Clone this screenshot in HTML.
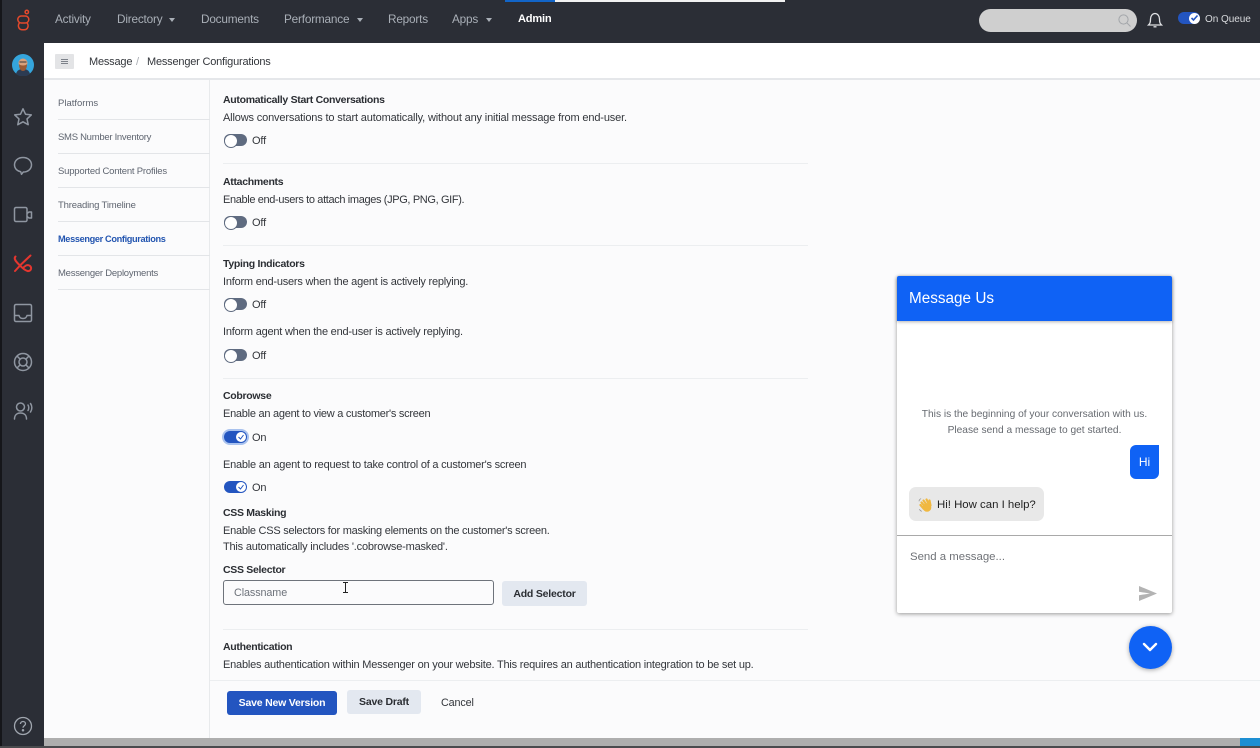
<!DOCTYPE html>
<html lang="en"><head><meta charset="utf-8"><title>Messenger Configurations</title>
<style>
*{box-sizing:border-box}
html,body{margin:0;padding:0}
body{width:1260px;height:748px;overflow:hidden;position:relative;background:#fbfbfc;font-family:"Liberation Sans",Arial,sans-serif;color:#2b2e33}
.a{position:absolute;white-space:nowrap;line-height:16px}
.nav{top:11px;font-size:11.8px;letter-spacing:-.2px;color:#a9afb7}
.side{left:58px;font-size:9.5px;letter-spacing:-.2px;color:#5f6570}
.line{position:absolute;left:58px;width:152px;height:1px;background:#e3e5e8}
.h{left:223px;font-size:10.5px;letter-spacing:-.3px;font-weight:bold;color:#2b2e33}
.t{left:223px;font-size:11px;letter-spacing:-.22px;color:#33363b}
.hr{position:absolute;left:223px;width:585px;height:1px;background:#eceef0}
.lab{left:252px;font-size:11px;letter-spacing:-.15px;color:#33363b}
.tg{position:absolute;left:224px;width:23px;height:12px;border-radius:6px}
.off{background:#5f6b80}
.off:before{content:"";position:absolute;left:0;top:0;width:12px;height:12px;border-radius:50%;background:#fff;border:1px solid #5f6b80}
.on{background:#2355c0}
.on:after{content:"";position:absolute;right:1px;top:1px;width:10px;height:10px;border-radius:50%;background:#fff}
.on svg{position:absolute;right:2px;top:2px;z-index:2}
.btn{position:absolute;font-size:10.5px;letter-spacing:-.2px;font-weight:bold;text-align:center;border-radius:3px}
.ic{position:absolute;left:13px}
</style></head><body>

<!-- top bar -->
<div style="position:absolute;left:0;top:0;width:1260px;height:43px;background:#2b2e36"></div>
<!-- left rail -->
<div style="position:absolute;left:0;top:0;width:44px;height:748px;background:#2b2e36"></div>
<div style="position:absolute;left:0;top:0;width:2px;height:748px;background:#15161a"></div>
<div style="position:absolute;left:505px;top:0;width:50px;height:2px;background:#1265c8"></div>
<div style="position:absolute;left:555px;top:0;width:230px;height:2px;background:#f1f1f1"></div>

<!-- logo -->
<svg style="position:absolute;left:15px;top:8px" width="18" height="24" viewBox="0 0 18 24" fill="none" stroke="#e5492c" stroke-width="1.5">
<circle cx="11.800" cy="4" r="1.700"/><rect x="2.800" y="8" width="11" height="7" rx="3.500"/><path d="M4.500 15c-2 2-1.300 6.800 3 6.800h1.500c4.300 0 5-4.800 3-6.800"/></svg>

<div class="a nav" style="left:55px">Activity</div>
<div class="a nav" style="left:117px">Directory</div>
<div style="position:absolute;left:169px;top:18px;border:3.500px solid transparent;border-top:4px solid #a9afb7"></div>
<div class="a nav" style="left:201px">Documents</div>
<div class="a nav" style="left:284px">Performance</div>
<div style="position:absolute;left:357px;top:18px;border:3.500px solid transparent;border-top:4px solid #a9afb7"></div>
<div class="a nav" style="left:388px">Reports</div>
<div class="a nav" style="left:452px">Apps</div>
<div style="position:absolute;left:486px;top:18px;border:3.500px solid transparent;border-top:4px solid #a9afb7"></div>
<div class="a nav" style="left:518px;color:#fff;font-weight:bold;font-size:11.100px">Admin</div>

<!-- search -->
<div style="position:absolute;left:979px;top:9px;width:158px;height:23px;border-radius:12px;background:#cfcfcf"></div>
<svg style="position:absolute;left:1117px;top:13px" width="15" height="15" viewBox="0 0 15 15" fill="none" stroke="#a3a6aa" stroke-width="1"><circle cx="6.500" cy="6.500" r="4.600"/><path d="M10 10l3.500 3.500"/></svg>
<!-- bell -->
<svg style="position:absolute;left:1146px;top:11px" width="18" height="18" viewBox="0 0 18 18" fill="none" stroke="#dfe1e4" stroke-width="1.300"><path d="M2.500 14h13c-1.500-1.500-2-2.500-2-6 0-3-2-5.500-4.500-5.500S4.500 5 4.500 8c0 3.500-.5 4.500-2 6z"/><path d="M7.500 15.800h3"/></svg>
<!-- queue toggle -->
<div style="position:absolute;left:1178px;top:12px;width:22px;height:12px;border-radius:6px;background:#2355c0"></div>
<div style="position:absolute;left:1189px;top:12.500px;width:11px;height:11px;border-radius:50%;background:#fff"></div>
<svg style="position:absolute;left:1190px;top:14px" width="9" height="8" viewBox="0 0 9 8" fill="none" stroke="#2355c0" stroke-width="1.600"><path d="M1.500 4l2 2 4-4.500"/></svg>
<div class="a" style="left:1205px;top:12px;font-size:10px;letter-spacing:-.05px;color:#d8dadd">On Queue</div>

<!-- content sheet -->
<div style="position:absolute;left:44px;top:43px;width:1216px;height:695px;background:#fbfbfc"></div>
<div style="position:absolute;left:44px;top:43px;width:1216px;height:37px;background:#fff;border-bottom:2px solid #e5e7ea"></div>
<div style="position:absolute;left:55px;top:54px;width:19px;height:15px;background:#e3e4e6;border-radius:1px"></div>
<div style="position:absolute;left:61px;top:59px;width:7px;height:1px;background:#7d828a;box-shadow:0 2px 0 #7d828a,0 4px 0 #7d828a"></div>
<div class="a" style="left:89px;top:54px;font-size:11px;letter-spacing:-.2px;color:#33363b">Message</div>
<div class="a" style="left:136px;top:54px;font-size:11px;color:#a8acb2">/</div>
<div class="a" style="left:147px;top:54px;font-size:11px;letter-spacing:-.2px;color:#33363b">Messenger Configurations</div>

<!-- avatar -->
<svg style="position:absolute;left:12px;top:54px" width="22" height="22" viewBox="0 0 22 22"><circle cx="11" cy="11" r="11" fill="#35a5dc"/><path d="M4 20c1-4 4-5 7-5s6 1 7 5a11 11 0 0 1-14 0z" fill="#2c3b52"/><circle cx="11" cy="9" r="4.500" fill="#d9a07a"/><path d="M7 10c0 5 2 7 4 7s4-2 4-7c-1 2-7 2-8 0z" fill="#9a5a34"/><path d="M7.500 8h7" stroke="#3a3a3a" stroke-width="1"/></svg>

<!-- rail icons -->
<svg class="ic" style="top:107px" width="20" height="20" viewBox="0 0 20 20" fill="none" stroke="#8f96a1" stroke-width="1.500" stroke-linejoin="round"><path d="M10 1.800l2.500 5.400 5.800.7-4.300 4 1.200 5.800-5.200-2.900-5.200 2.900 1.200-5.800-4.300-4 5.800-.7z"/></svg>
<svg class="ic" style="top:156px" width="20" height="20" viewBox="0 0 20 20" fill="none" stroke="#8f96a1" stroke-width="1.500" stroke-linejoin="round"><path d="M10 1.500c4.800 0 8.500 3 8.500 7.300s-3.700 7.200-8.200 7.200l-1.800 2.300-.8-2.600C4 15 1.500 12.400 1.500 8.800 1.500 4.500 5.200 1.500 10 1.500z"/></svg>
<svg class="ic" style="top:205px" width="20" height="20" viewBox="0 0 20 20" fill="none" stroke="#8f96a1" stroke-width="1.500" stroke-linejoin="round"><rect x="1.500" y="2.500" width="12.500" height="14" rx="1.500"/><path d="M14 8.500l2-1.500h2.500v6H16l-2-1.500"/></svg>
<svg class="ic" style="top:253px" width="20" height="21" viewBox="0 0 20 21" fill="none" stroke="#e5362f" stroke-width="2" stroke-linecap="round" stroke-linejoin="round"><path d="M17.500 2.500L8 11.500 2 18"/><path d="M2.500 3.500C1 5 2 7.500 4.500 10c3 3 6 7 10 8 2.500.5 4-1.500 3.500-3.500-.5-2-3-3-5-2l-2 1.500"/></svg>
<svg class="ic" style="top:303px" width="20" height="20" viewBox="0 0 20 20" fill="none" stroke="#8f96a1" stroke-width="1.500" stroke-linejoin="round"><rect x="1.500" y="1.500" width="17" height="17" rx="1.500"/><path d="M1.500 12.500h4.500c.5 2 2 3 4 3s3.500-1 4-3h4.500"/></svg>
<svg class="ic" style="top:352px" width="20" height="20" viewBox="0 0 20 20" fill="none" stroke="#8f96a1" stroke-width="1.500"><circle cx="10" cy="10" r="8.500"/><circle cx="10" cy="10" r="4"/><path d="M4 4l3 3M16 4l-3 3M4 16l3-3M16 16l-3-3"/></svg>
<svg class="ic" style="top:401px" width="20" height="20" viewBox="0 0 20 20" fill="none" stroke="#8f96a1" stroke-width="1.500" stroke-linecap="round"><circle cx="7.500" cy="6" r="4"/><path d="M1.500 18c0-4 2.500-6 6-6s6 2 6 6"/><path d="M15 4c1 1.500 1 4 0 5.500M17.500 2.500c1.800 2.500 1.800 6 0 8.500"/></svg>
<svg class="ic" style="top:716px" width="20" height="20" viewBox="0 0 20 20" fill="none" stroke="#a0a6af" stroke-width="1.300"><circle cx="10" cy="10" r="8.500"/><path d="M7.500 8c0-1.500 1.100-2.500 2.500-2.500s2.500 1 2.500 2.300c0 2-2.500 2-2.500 4"/><circle cx="10" cy="14.300" r=".6" fill="#a0a6af"/></svg>

<!-- side menu -->
<div style="position:absolute;left:209px;top:80px;width:1px;height:658px;background:#e8eaec"></div>
<div class="a side" style="top:96px;letter-spacing:0">Platforms</div><div class="line" style="top:119px"></div>
<div class="a side" style="top:130px;letter-spacing:-.28px">SMS Number Inventory</div><div class="line" style="top:153px"></div>
<div class="a side" style="top:164px">Supported Content Profiles</div><div class="line" style="top:187px"></div>
<div class="a side" style="top:198px;letter-spacing:-.17px">Threading Timeline</div><div class="line" style="top:221px"></div>
<div class="a side" style="top:231px;color:#2355b0;font-weight:bold;font-size:9.200px;letter-spacing:-.35px">Messenger Configurations</div><div class="line" style="top:255px"></div>
<div class="a side" style="top:266px;letter-spacing:-.24px">Messenger Deployments</div><div class="line" style="top:289px"></div>

<!-- settings -->
<div class="a h" style="top:92px">Automatically Start Conversations</div>
<div class="a t" style="top:110px;letter-spacing:-.155px">Allows conversations to start automatically, without any initial message from end-user.</div>
<div class="tg off" style="top:134px"></div><div class="a lab" style="top:133px">Off</div>
<div class="hr" style="top:163px"></div>

<div class="a h" style="top:174px">Attachments</div>
<div class="a t" style="top:192px;letter-spacing:-.36px">Enable end-users to attach images (JPG, PNG, GIF).</div>
<div class="tg off" style="top:216px"></div><div class="a lab" style="top:215px">Off</div>
<div class="hr" style="top:245px"></div>

<div class="a h" style="top:256px">Typing Indicators</div>
<div class="a t" style="top:274px">Inform end-users when the agent is actively replying.</div>
<div class="tg off" style="top:298px"></div><div class="a lab" style="top:297px">Off</div>
<div class="a t" style="top:324px">Inform agent when the end-user is actively replying.</div>
<div class="tg off" style="top:349px"></div><div class="a lab" style="top:348px">Off</div>
<div class="hr" style="top:378px"></div>

<div class="a h" style="top:388px">Cobrowse</div>
<div class="a t" style="top:406px;letter-spacing:-.26px">Enable an agent to view a customer's screen</div>
<div class="tg on" style="top:431px;box-shadow:0 0 0 2px #a9c2ee"><svg width="8" height="8" viewBox="0 0 8 8" fill="none" stroke="#2355c0" stroke-width="1"><path d="M1.500 4l2 2 3-4"/></svg></div><div class="a lab" style="top:430px">On</div>
<div class="a t" style="top:457px">Enable an agent to request to take control of a customer's screen</div>
<div class="tg on" style="top:481px"><svg width="8" height="8" viewBox="0 0 8 8" fill="none" stroke="#2355c0" stroke-width="1"><path d="M1.500 4l2 2 3-4"/></svg></div><div class="a lab" style="top:480px">On</div>

<div class="a h" style="top:505px">CSS Masking</div>
<div class="a t" style="top:523px;letter-spacing:-.25px">Enable CSS selectors for masking elements on the customer's screen.</div>
<div class="a t" style="top:539px;letter-spacing:-.2px">This automatically includes '.cobrowse-masked'.</div>
<div class="a h" style="top:562px">CSS Selector</div>
<div style="position:absolute;left:223px;top:580px;width:271px;height:25px;border:1px solid #6e737b;border-radius:3px;background:#fbfbfc"></div>
<div class="a" style="left:234px;top:585px;font-size:10.800px;letter-spacing:-.1px;color:#6d727a">Classname</div>
<div style="position:absolute;left:345px;top:582px;width:1px;height:10px;background:#222"></div>
<div style="position:absolute;left:343px;top:582px;width:5px;height:1px;background:#222;box-shadow:0 10px 0 #222"></div>
<div class="btn" style="left:502px;top:581px;width:85px;height:25px;line-height:26px;background:#e3e8f0;color:#2b2e33">Add Selector</div>
<div class="hr" style="top:629px"></div>
<div class="a h" style="top:639px">Authentication</div>
<div class="a t" style="top:657px;letter-spacing:-.21px">Enables authentication within Messenger on your website. This requires an authentication integration to be set up.</div>

<!-- footer -->
<div style="position:absolute;left:210px;top:680px;width:1050px;height:1px;background:#eceef0"></div>
<div class="btn" style="left:227px;top:691px;width:110px;height:24px;line-height:24px;background:#2355c0;color:#fff">Save New Version</div>
<div class="btn" style="left:347px;top:690px;width:74px;height:24px;line-height:25px;background:#e3e8f0;color:#2b2e33">Save Draft</div>
<div class="a" style="left:441px;top:695px;font-size:10.800px;letter-spacing:-.15px;color:#33363b">Cancel</div>

<!-- bottom bar -->
<div style="position:absolute;left:44px;top:738px;width:1216px;height:10px;background:#aeaeae"></div>
<div style="position:absolute;left:1240px;top:738px;width:20px;height:10px;background:#1d8ed2"></div>
<div style="position:absolute;left:0;top:746px;width:1260px;height:2px;background:#4a4b4e"></div>

<!-- messenger -->
<div style="position:absolute;left:897px;top:276px;width:275px;height:337px;background:#fff;box-shadow:0 1px 4px rgba(0,0,0,.4);border-radius:2px"></div>
<div style="position:absolute;left:897px;top:276px;width:275px;height:45px;background:#0f62f5;border-radius:2px 2px 0 0;box-shadow:0 1px 3px rgba(0,0,0,.3)"></div>
<div class="a" style="left:909px;top:289px;font-size:15.300px;line-height:20px;color:#fff">Message Us</div>
<div class="a" style="left:897px;width:275px;text-align:center;top:407px;font-size:10.200px;color:#666a70">This is the beginning of your conversation with us.</div>
<div class="a" style="left:897px;width:275px;text-align:center;top:423px;font-size:10.200px;color:#666a70">Please send a message to get started.</div>
<div style="position:absolute;left:1130px;top:445px;width:29px;height:34px;background:#0f62f5;border-radius:6px 0 6px 6px"></div>
<div class="a" style="left:1130px;width:29px;text-align:center;top:454px;font-size:12px;color:#fff">Hi</div>
<div style="position:absolute;left:909px;top:487px;width:135px;height:34px;background:#e8e8e8;border-radius:7px"></div>
<svg style="position:absolute;left:918px;top:497px" width="16" height="16" viewBox="0 0 16 16" fill="none" stroke="#f0b840" stroke-linecap="round"><path d="M3.500 5.500l3.500 4M5.500 3.500l3.500 5M8.500 2.500l2.500 5M11.500 3.500l1 5" stroke-width="2.200"/><circle cx="9" cy="10.500" r="4.300" fill="#f0b840" stroke="none"/><path d="M2.500 8l3 3.500" stroke-width="2.200"/><path d="M1 4c.2-1 .8-1.800 1.800-2.300M1.500 12.500c.5.800 1 1.300 2 1.700" stroke="#9a9a9a" stroke-width=".8"/></svg>
<div class="a" style="left:937px;top:497px;font-size:11.400px;color:#222">Hi! How can I help?</div>
<div style="position:absolute;left:897px;top:535px;width:275px;height:1px;background:#a9a9a9"></div>
<div class="a" style="left:910px;top:549px;font-size:11.400px;color:#6f7277">Send a message...</div>
<svg style="position:absolute;left:1139px;top:586px" width="18" height="15" viewBox="0 0 18 15"><path d="M0 0l18 7.500L0 15l0-5.800 11-1.700L0 5.800z" fill="#b3b3b3"/></svg>
<div style="position:absolute;left:1129px;top:626px;width:43px;height:43px;border-radius:50%;background:#0f62f5;box-shadow:0 1px 5px rgba(0,0,0,.35)"></div>
<svg style="position:absolute;left:1142px;top:642px" width="16" height="11" viewBox="0 0 16 11" fill="none" stroke="#fff" stroke-width="2.400" stroke-linecap="round" stroke-linejoin="round"><path d="M2 2l6 6 6-6"/></svg>
</body></html>
